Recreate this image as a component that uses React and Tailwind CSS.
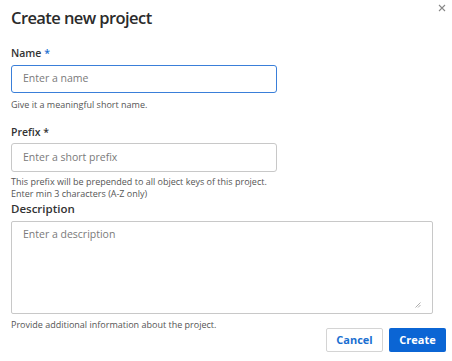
import React from "react";

export default function App() {
  return (
    <div
      className="relative w-[452px] h-[361px] bg-white overflow-hidden text-[#333]"
      style={{ fontFamily: '"Open Sans", "Noto Sans", sans-serif' }}
    >
      <button className="absolute right-[5px] top-[3px] w-[10px] h-[10px] flex items-center justify-center text-[#888]">
        <svg width="8" height="8" viewBox="0 0 8 8" fill="none" stroke="currentColor" strokeWidth="1.1">
          <path d="M1 1L7 7M7 1L1 7" />
        </svg>
      </button>
      <div className="flex flex-col pl-[11px] pr-[6px]">
        <h1 className="mt-[6px] h-[24px] leading-[24px] text-[16.5px] font-semibold tracking-[-0.035em] text-[#2b2b2b]">
          Create new project
        </h1>
        <label className="mt-[15px] h-[16px] leading-[16px] text-[10.5px] font-semibold text-[#333]">
          Name <span className="text-[#1a6fd1]">*</span>
        </label>
        <div className="mt-[4px] w-[266px] h-[28px] rounded-[3px] border-[1.5px] border-[#3a7fd9] flex items-center pl-[11px] text-[10.5px] text-[#7a7a7a]">
          Enter a name
        </div>
        <p className="mt-[6px] h-[12px] leading-[12px] text-[9px] text-[#555]">
          Give it a meaningful short name.
        </p>
        <label className="mt-[13px] h-[16px] leading-[16px] text-[10.5px] font-semibold text-[#333]">
          Prefix <span className="text-[#333]">*</span>
        </label>
        <div className="mt-[3px] w-[266px] h-[29px] rounded-[3px] border border-[#c8c8c8] flex items-center pl-[11px] text-[10.5px] text-[#7a7a7a]">
          Enter a short prefix
        </div>
        <p className="mt-[4px] leading-[11.5px] text-[9px] text-[#555]">
          This prefix will be prepended to all object keys of this project.
          <br />
          Enter min 3 characters (A-Z only)
        </p>
        <label className="mt-[2px] h-[16px] leading-[16px] text-[11.5px] font-semibold text-[#333]">
          Description
        </label>
        <div className="relative mt-[4px] w-[422px] h-[93px] rounded-[2px] border border-[#c8c8c8] pl-[11px] pt-[5px] text-[10.5px] text-[#7a7a7a]">
          Enter a description
          <svg className="absolute right-[11px] bottom-[5px]" width="6" height="6" viewBox="0 0 6 6" stroke="#999" strokeWidth="0.8">
            <path d="M5.5 0.5L0.5 5.5M5.5 3L3 5.5" />
          </svg>
        </div>
        <p className="mt-[5px] h-[12px] leading-[12px] text-[9px] text-[#555]">
          Provide additional information about the project.
        </p>
        <div className="flex justify-end gap-[6px] -mt-[3px]">
          <button className="w-[57px] h-[24px] rounded-[2px] border border-[#d4d4d4] bg-white text-[11px] font-bold text-[#1a6fd1]">
            Cancel
          </button>
          <button className="w-[57px] h-[24px] rounded-[2px] bg-[#0b65d4] text-[11px] font-bold text-white">
            Create
          </button>
        </div>
      </div>
    </div>
  );
}
